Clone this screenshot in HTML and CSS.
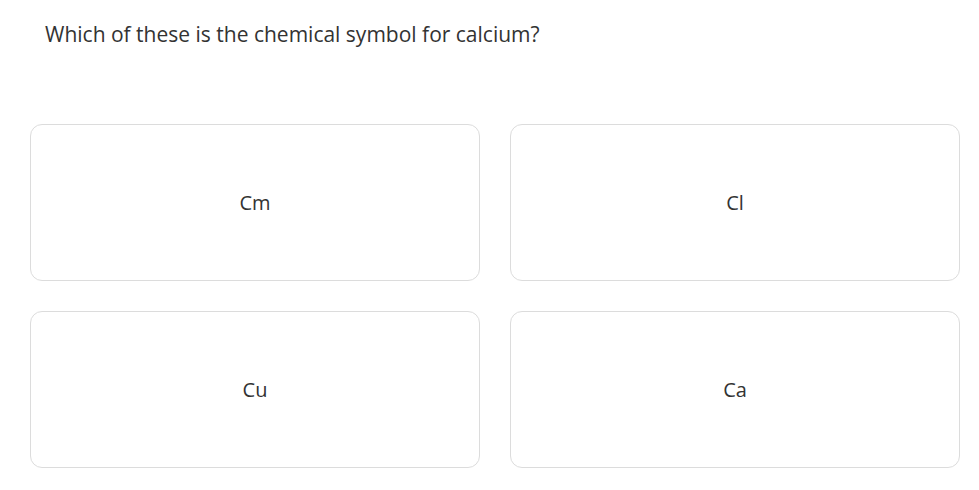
FILE: index.html
```html
<!DOCTYPE html>
<html>
<head>
<meta charset="utf-8">
<link rel="stylesheet" href="styles.css">
</head>
<body>
<div class="quiz">
  <h1 class="question">Which of these is the chemical symbol for calcium?</h1>
  <div class="options">
    <div class="option">Cm</div>
    <div class="option">Cl</div>
    <div class="option">Cu</div>
    <div class="option">Ca</div>
  </div>
</div>
</body>
</html>
```
FILE: styles.css
```css
html, body {
  margin: 0;
  padding: 0;
  background: #fff;
}
body {
  font-family: "Open Sans", "Noto Sans", sans-serif;
  color: #333;
}
.quiz {
  padding: 20px 19px 0 30px;
}
.question {
  margin: 0 0 0 15px;
  font-size: 21px;
  font-weight: 400;
  line-height: 28px;
}
.options {
  margin-top: 76px;
  display: grid;
  grid-template-columns: 1fr 1fr;
  column-gap: 30px;
  row-gap: 30px;
}
.option {
  height: 157px;
  box-sizing: border-box;
  border: 1px solid #dcdcdc;
  border-radius: 12px;
  display: flex;
  align-items: center;
  justify-content: center;
  font-size: 20px;
}
```
